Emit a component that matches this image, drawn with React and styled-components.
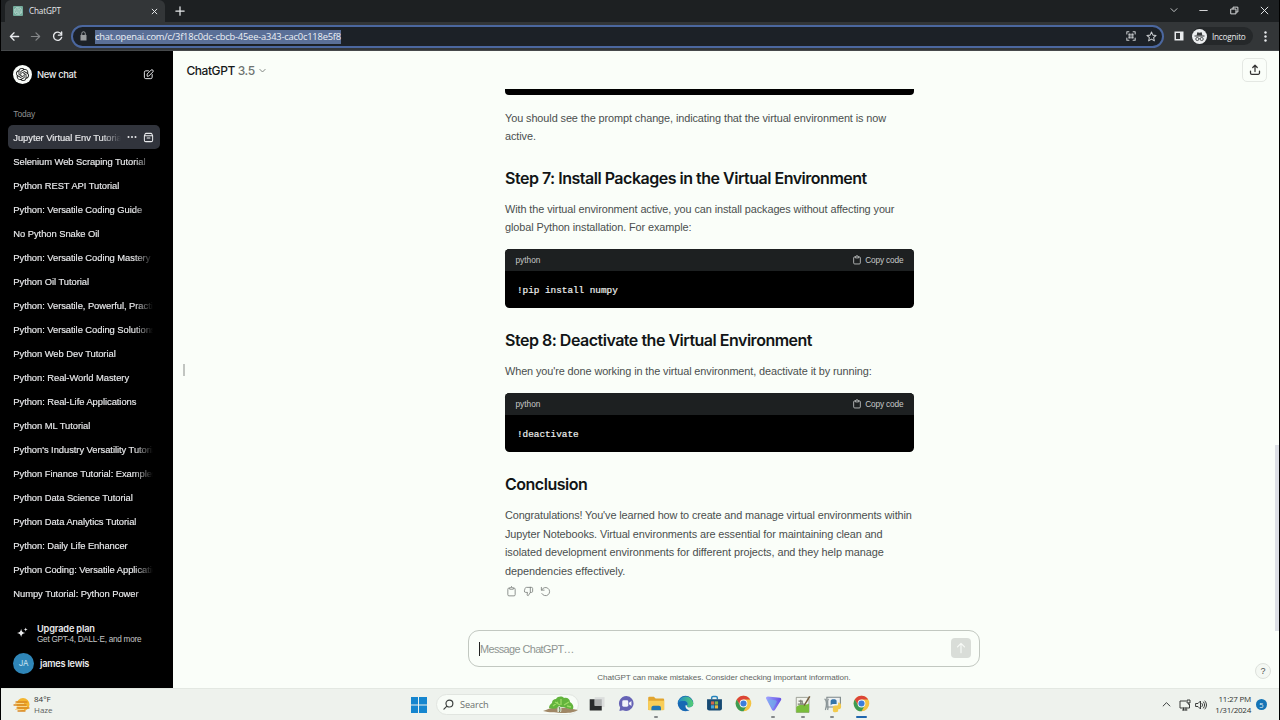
import React from "react";
import styled, { createGlobalStyle, css } from "styled-components";
import { SiOpenai } from "react-icons/si";

const sans = `"Liberation Sans", Arial, sans-serif`;
const display = `Inter, "Liberation Sans", sans-serif`;
const system = `"Open Sans", "Noto Sans", sans-serif`;

const GlobalStyle = createGlobalStyle`
  *, *::before, *::after { box-sizing: border-box; }
  body { margin: 0; background: #000; overflow: hidden; }
  svg { display: block; flex: none; }
`;

const Screen = styled.div`
  width: 1280px;
  height: 720px;
  padding: 0 1px;
  display: flex;
  flex-direction: column;
  background: #000;
  font-family: ${sans};
  overflow: hidden;
`;

/* ---------- browser chrome ---------- */
const TabStrip = styled.div`
  height: 22px;
  flex: none;
  display: flex;
  align-items: center;
  background: #1d2022;
  color: #e6e8ea;
  padding-left: 4px;
`;
const Tab = styled.div`
  width: 160px;
  height: 22px;
  display: flex;
  align-items: center;
  padding: 0 7px 0 8px;
  background: #333638;
  border-radius: 6px 6px 0 0;
  font: 8.2px ${system};
  letter-spacing: -0.18px;
`;
const Favicon = styled.span`
  width: 10px;
  height: 10px;
  margin-right: 6px;
  display: grid;
  place-items: center;
  background: #75ac9d;
  color: #c9e2da;
  border-radius: 1px;
`;
const TabTitle = styled.span`
  flex: 1;
  padding-bottom: 1px;
`;
const NewTab = styled.div`
  margin-left: 10px;
`;
const WindowButtons = styled.div`
  margin-left: auto;
  display: flex;
  align-items: center;
  gap: 21.3px;
  padding-right: 10px;
  margin-top: -2px;
`;
const Toolbar = styled.div`
  height: 29px;
  flex: none;
  display: flex;
  align-items: center;
  background: #333638;
  border-bottom: 1px solid #46494b;
  color: #e8eaed;
  padding-left: 8px;
`;
const NavButtons = styled.div`
  width: 62px;
  display: flex;
  align-items: center;
  gap: 10.3px;
`;
const AddressBar = styled.div`
  width: 1093px;
  height: 23px;
  display: flex;
  align-items: center;
  border: 2px solid #4b679f;
  border-radius: 12px;
  background: #1c2127;
  padding: 0 5px 0 6px;
`;
const Url = styled.span`
  margin-left: 7px;
  height: 14px;
  margin-top: 1px;
  line-height: 14px;
  background: #5a6f97;
  color: #eceff5;
  font-family: ${system};
  font-size: 9.33px;
  letter-spacing: -0.19px;
  white-space: nowrap;
`;
const AddressActions = styled.div`
  margin-left: auto;
  display: flex;
  align-items: center;
  gap: 10.5px;
  color: #c8cbce;
`;
const ToolbarEnd = styled.div`
  display: flex;
  align-items: center;
  margin-left: 10px;
`;
const Incognito = styled.div`
  height: 18px;
  margin: 0 10.5px 0 8px;
  width: 61px;
  display: flex;
  align-items: center;
  gap: 5px;
  border-radius: 9px;
  background: #25282a;
  font: 8.2px ${system};
  letter-spacing: -0.22px;
`;

/* ---------- page ---------- */
const Page = styled.div`
  height: 637px;
  flex: none;
  display: flex;
  background: #fafef9;
`;
const Sidebar = styled.nav`
  width: 172px;
  flex: none;
  display: flex;
  flex-direction: column;
  background: #000;
  color: #e9eaec;
  padding: 0 13px 0 7px;
`;
const NewChat = styled.div`
  height: 46px;
  display: flex;
  align-items: center;
  padding: 0 6px 0 5px;
  font-family: ${display};
  font-size: 9.33px;
  font-weight: 500;
  letter-spacing: -0.35px;
  span:nth-child(2) { flex: 1; padding-top: 1px; }
`;
const LogoCircle = styled.span`
  width: 19px;
  height: 19px;
  margin-right: 5px;
  display: grid;
  place-items: center;
  border-radius: 50%;
  background: #f8fbf8;
  color: #111;
`;
const SectionLabel = styled.div`
  height: 28px;
  padding: 11px 5.3px 0;
  font-size: 8.4px;
  line-height: 12px;
  letter-spacing: -0.1px;
  color: #8f9191;
`;
const ChatRow = styled.div`
  height: 24px;
  flex: none;
  display: flex;
  align-items: center;
  padding: 0 6px 0 5.3px;
  border-radius: 5px;
  font-size: 9.4px;
  white-space: nowrap;
  ${(p) => p.$active && css`background: #31343c;`}
`;
const ChatTitle = styled.span`
  flex: 1;
  overflow: hidden;
  padding-top: 1px;
  line-height: 16px;
  letter-spacing: -0.05px;
  -webkit-text-stroke: 0.15px currentColor;
  margin-right: ${(p) => (p.$active ? 6 : 1)}px;
  mask-image: linear-gradient(to right, #000 calc(100% - 19px), transparent);
`;
const RowActions = styled.span`
  display: flex;
  align-items: center;
  gap: 6px;
`;
const SidebarFooter = styled.div`
  margin-top: auto;
  padding-bottom: 14px;
`;
const Upgrade = styled.div`
  display: flex;
  align-items: center;
  gap: 9px;
  padding-left: 9px;
  height: 26px;
  svg { margin-top: -3px; }
`;
const UpgradeTitle = styled.div`
  font-family: ${display};
  font-size: 9.2px;
  line-height: 10px;
  font-weight: 600;
  letter-spacing: -0.15px;
`;
const UpgradeText = styled.div`
  font-size: 8.2px;
  line-height: 11px;
  letter-spacing: -0.27px;
  color: #c5c7c8;
  white-space: nowrap;
`;
const User = styled.div`
  display: flex;
  align-items: center;
  gap: 6px;
  height: 22px;
  margin-top: 5px;
  padding-left: 5px;
  font-family: ${display};
  font-size: 9.2px;
  font-weight: 600;
  letter-spacing: -0.22px;
`;
const Avatar = styled.span`
  width: 21px;
  height: 21px;
  display: grid;
  place-items: center;
  border-radius: 50%;
  background: #2f86b8;
  color: #c6e2f1;
  font-size: 8px;
  font-weight: 400;
`;

const Main = styled.main`
  position: relative;
  flex: 1;
  display: flex;
  flex-direction: column;
`;
const Header = styled.header`
  height: 38px;
  flex: none;
  display: flex;
  align-items: center;
  justify-content: space-between;
  padding: 0 12px 0 13.5px;
`;
const Model = styled.div`
  display: flex;
  align-items: center;
  gap: 3px;
  font-family: ${display};
  font-size: 12px;
  font-weight: 500;
  letter-spacing: -0.45px;
  color: #16191a;
  span { color: #6e7371; }
`;
const ShareButton = styled.div`
  width: 25px;
  height: 24px;
  display: grid;
  place-items: center;
  border: 1px solid #e4e8e3;
  border-radius: 5px;
  color: #333;
`;
const Article = styled.article`
  width: 409px;
  height: 541px;
  flex: none;
  margin-left: 332px;
  color: #4a4f4e;
`;
const PreviousBlock = styled.div`
  height: 6px;
  background: #000;
  border-radius: 0 0 4px 4px;
`;
const Paragraph = styled.p`
  margin: 0;
  padding-top: ${(p) => p.$top || 10.7}px;
  font-size: 10.9px;
  line-height: 18.67px;
  white-space: nowrap;
`;
const Line = styled.span`
  display: block;
  letter-spacing: ${(p) => p.$track ?? -0.09}px;
`;
const Heading = styled.h3`
  margin: 0;
  padding-top: ${(p) => p.$top || 21.6}px;
  font-family: ${display};
  font-size: 16px;
  line-height: 21.3px;
  font-weight: 600;
  letter-spacing: ${(p) => p.$track ?? -0.49}px;
  color: #111516;
  white-space: nowrap;
`;
const CodeCard = styled.div`
  height: 58.6px;
  margin-top: 12.6px;
  border-radius: 4.5px;
  overflow: hidden;
  background: #000;
`;
const CodeHeader = styled.div`
  height: 21.4px;
  display: flex;
  align-items: center;
  justify-content: space-between;
  padding: 0 10.5px;
  background: #1d2021;
  color: #c6c9c9;
  font-size: 8.3px;
`;
const CopyCode = styled.span`
  display: flex;
  align-items: center;
  gap: 3px;
  letter-spacing: -0.15px;
`;
const Code = styled.code`
  display: block;
  padding: 13.2px 12px 0;
  font: 400 9.33px/14px "Liberation Mono", monospace;
  -webkit-text-stroke: 0.2px currentColor;
  color: #eceeed;
`;
const MessageActions = styled.div`
  display: flex;
  gap: 6.3px;
  padding: 5px 0 0 0.6px;
  color: #858a87;
`;
const Composer = styled.div`
  width: 512px;
  height: 37px;
  flex: none;
  margin-left: 295px;
  display: flex;
  align-items: center;
  padding: 0 8px 1px 10px;
  border: 1px solid #c2c8c1;
  border-radius: 11px;
  color: #8f9592;
  font-size: 10.9px;
`;
const Caret = styled.span`
  width: 1px;
  height: 14px;
  margin-top: 1px;
  background: #222;
`;
const Placeholder = styled.span`
  flex: 1;
  padding-top: 2px;
  letter-spacing: -0.6px;
  span { letter-spacing: -0.2px; }
`;
const SendButton = styled.span`
  width: 20px;
  height: 20px;
  display: grid;
  place-items: center;
  border-radius: 4px;
  background: #d9ddd8;
  color: #f7faf6;
`;
const Disclaimer = styled.div`
  width: 512px;
  margin-left: 295px;
  text-align: center;
  padding-top: 5px;
  font-size: 8.1px;
  line-height: 12px;
  letter-spacing: -0.05px;
  color: #5f6563;
`;
const ResizeHandle = styled.div`
  position: absolute;
  left: 9.5px;
  top: 313px;
  width: 2.5px;
  height: 12px;
  background: #c1c5c1;
`;
const ScrollThumb = styled.div`
  position: absolute;
  right: 0;
  top: 394px;
  width: 4px;
  height: 186px;
  background: #dcdfe5;
`;
const Help = styled.div`
  position: absolute;
  right: 8px;
  bottom: 9px;
  width: 16px;
  height: 16px;
  display: grid;
  place-items: center;
  border: 1px solid #dde1dc;
  border-radius: 50%;
  background: #f4f8f3;
  color: #4c5150;
  font-size: 9px;
`;

/* ---------- taskbar ---------- */
const Taskbar = styled.footer`
  height: 32px;
  flex: none;
  display: flex;
  align-items: center;
  background: #eef2ed;
  color: #303332;
  font-family: ${system};
  font-size: 8px;
  border-top: 1px solid #e3e8e2;
`;
const Weather = styled.div`
  width: 409px;
  display: flex;
  align-items: center;
  gap: 4px;
  padding-left: 12px;
  line-height: 10.6px;
  div div:last-child { color: #5b5f5d; }
`;
const SearchBox = styled.div`
  width: 143px;
  height: 21px;
  margin: 0 8px 0 9px;
  display: flex;
  align-items: center;
  gap: 6px;
  padding-left: 6px;
  border: 1px solid #e1e5e0;
  border-radius: 11px;
  background: #f8fcf7;
  color: #6b6f6d;
  font-size: 9.2px;
  letter-spacing: -0.1px;
  svg:last-child { margin-left: auto; }
`;
const Apps = styled.div`
  display: flex;
  gap: 9.4px;
`;
const AppSlot = styled.div`
  width: 20px;
  height: 26px;
  padding-top: 3px;
  display: flex;
  flex-direction: column;
  align-items: center;
  justify-content: space-between;
  &::after {
    content: "";
    height: 2px;
    width: ${(p) => (p.$state === "active" ? 11 : 4)}px;
    border-radius: 1px;
    background: ${(p) => (p.$state === "active" ? "#1f66ad" : p.$state === "open" ? "#85898a" : "transparent")};
  }
`;
const Tray = styled.div`
  margin-left: auto;
  display: flex;
  align-items: center;
  padding-right: 12px;
`;
const Clock = styled.div`
  width: 42px;
  margin: 0 5px 0 2px;
  text-align: right;
  line-height: 10.6px;
  font-size: 8px;
  letter-spacing: -0.25px;
  white-space: nowrap;
`;
const Badge = styled.span`
  width: 11px;
  height: 11px;
  display: grid;
  place-items: center;
  border-radius: 50%;
  background: #1574b5;
  color: #e7f3fa;
  font-size: 7.5px;
`;

const Icon = ({ size = 12, width = 2, box = 24, children, ...rest }) => (
  <svg width={size} height={size} viewBox={`0 0 ${box} ${box}`} fill="none" stroke="currentColor"
    strokeWidth={width} strokeLinecap="round" strokeLinejoin="round" {...rest}>{children}</svg>
);
const TrayIcon = styled(Icon)`
  margin-left: ${(p) => p.$gap}px;
`;

const Clipboard = ({ size = 11 }) => (
  <Icon size={size} width={2}>
    <path d="M8 4.500H6.500A2.500 2.500 0 0 0 4 7v12a2.500 2.500 0 0 0 2.500 2.500h11A2.500 2.500 0 0 0 20 19V7a2.500 2.500 0 0 0-2.500-2.500H16" />
    <path d="M12 2a2 2 0 0 0-2 1.500H9A1 1 0 0 0 8 4.500V7h8V4.500a1 1 0 0 0-1-1h-1A2 2 0 0 0 12 2z" />
  </Icon>
);

const ChromeLogo = () => (
  <svg width="17" height="17" viewBox="0 0 24 24">
    <circle cx="12" cy="12" r="11" fill="#f3c343" />
    <path d="M2.470 6.500A11 11 0 0 1 21.530 6.500H12L7.240 14.750z" fill="#dc4538" />
    <path d="M2.470 6.500A11 11 0 0 0 12 23L16.760 14.750H7.240z" fill="#3d9b52" />
    <circle cx="12" cy="12" r="5.500" fill="#f5f8f5" />
    <circle cx="12" cy="12" r="4.300" fill="#3b7ddb" />
  </svg>
);

const EdgeLogo = () => (
  <svg width="17" height="17" viewBox="0 0 24 24">
    <defs>
      <linearGradient id="edgeTop" x1="0" x2="1"><stop stopColor="#1d87d0" /><stop offset="1" stopColor="#54cf70" /></linearGradient>
    </defs>
    <circle cx="12" cy="12" r="11" fill="#1768b3" />
    <path d="M1.300 11A11 11 0 0 1 23 12c0 4-3 5.500-6 5.500-2.500 0-3.500-1-2.600-2.600C16 12 14 8.500 10 8.500 6 8.500 3 9 1.300 11z" fill="url(#edgeTop)" />
    <path d="M14.400 14.900c-.9 1.600.1 2.600 2.600 2.600 2 0 4-.7 5.200-2.300l1.300 3.300-3 3c-5 .5-9-2-8.500-7z" fill="#eef2ed" />
  </svg>
);

const StoreLogo = () => (
  <svg width="17" height="17" viewBox="0 0 24 24">
    <path d="M8 6V4a2 2 0 0 1 2-2h4a2 2 0 0 1 2 2v2" fill="none" stroke="#2583bd" strokeWidth="2" />
    <path d="M1.500 6h21v13a3 3 0 0 1-3 3h-15a3 3 0 0 1-3-3z" fill="#174a73" />
    <path d="M7 9h4.500v4.500H7z" fill="#d1664c" /><path d="M12.500 9H17v4.500h-4.500z" fill="#82b84b" />
    <path d="M7 14.500h4.500V19H7z" fill="#45a7da" /><path d="M12.500 14.500H17V19h-4.500z" fill="#e7b941" />
  </svg>
);

const FolderLogo = () => (
  <svg width="18" height="17" viewBox="0 0 24 24">
    <path d="M1 4a1.500 1.500 0 0 1 1.500-1.500H9L11.500 5H22a1.500 1.500 0 0 1 1.500 1.500V21H1z" fill="#e2a52f" />
    <path d="M1 8h22.500v12a1.500 1.500 0 0 1-1.500 1.500H2.500A1.500 1.500 0 0 1 1 20z" fill="#f8ce59" />
    <path d="M5.500 21.500V18a3 3 0 0 1 3-3H16a3 3 0 0 1 3 3v3.500z" fill="#2176b4" />
  </svg>
);

const TaskViewLogo = () => (
  <svg width="17" height="17" viewBox="0 0 24 24">
    <path d="M8 3h14v14H8z" fill="#dcdedd" /><path d="M1 6h7v9h10v7H1z" fill="#282a2b" /><path d="M8 6h10v9H8z" fill="#aeb0b0" />
  </svg>
);

const ChatLogo = () => (
  <svg width="17" height="17" viewBox="0 0 24 24">
    <path d="M12 1.500A10.500 10.500 0 1 1 7 21.500L2 22.500 3 17.500A10.500 10.500 0 0 1 12 1.500z" fill="#6663b5" />
    <rect x="6" y="7.500" width="8.500" height="9" rx="2" fill="#f2f3fa" /><path d="m15.500 11 3.500-2.500v7L15.500 13z" fill="#f2f3fa" />
  </svg>
);

const VpnLogo = () => (
  <svg width="17" height="17" viewBox="0 0 24 24">
    <defs><linearGradient id="vpn" x1="0" x2="1"><stop stopColor="#9fa5ff" /><stop offset="1" stopColor="#6550e2" /></linearGradient></defs>
    <path d="M1.500 5C1 3 2.500 2 4 2l17 2c2 .3 2.500 2 1.500 3.500L14 21c-1 1.500-3 1.500-4 0z" fill="url(#vpn)" />
    <path d="m5 6 10 1.500c2 .5 2 2 1 3.500l-5 9L4 8z" fill="#6fb6e9" opacity=".65" />
  </svg>
);

const NotepadLogo = () => (
  <svg width="18" height="19" viewBox="0 0 24 25">
    <path d="M3 3h15l2 3v17H3z" fill="#f2f4ed" stroke="#858a7d" />
    <path d="M3 16c5-6 10-1 17-5v12H3z" fill="#79bd3b" />
    <path d="M6 8h5v4M9 6v5M5 12h9" stroke="#7b7e72" strokeWidth="1.500" fill="none" />
    <path d="m22 2-7 11-2 2 .5-3L20 1z" fill="#725b3b" />
  </svg>
);

const PythonLogo = () => (
  <svg width="19" height="18" viewBox="0 0 25 24">
    <path d="M5 3h18v13H5z" fill="#eef1f1" stroke="#7e8789" strokeWidth="1.500" />
    <path d="M2 5c3 2 3 9 1 15M7 5c-3 5 1 9-1 15" stroke="#899496" strokeWidth="1.600" fill="none" />
    <path d="M10 14V8c0-2 1.500-2.500 4-2.500S18 6 18 8v4h-5c-2 0-2 1-3 2z" fill="#3574a9" />
    <path d="M20 10c3 0 4 2 4 5s-1 4-3 4h-1v3c-3 2-7 1-7-1v-4c0-2 1-3 3-3h3c1 0 1-1 1-4z" fill="#f3ca4c" />
  </svg>
);

const TreeArt = () => (
  <svg width="35" height="17" viewBox="0 0 35 17">
    <path d="M0 15c7-3 10-4 15-3 8-1 13 1 20 2-5 3-10 3-17 3-7-1-11 0-18-2z" fill="#a08766" />
    <path d="M6 12c0-3 2-4 3-5 0-3 2-4 4-4 2-3 6-3 8-1 3-1 6 1 6 4 3 2 4 4 3 7-5 1-8-2-11-2-3 0-7 3-13 1z" fill="#62b43c" />
    <path d="m10 10 5-4M18 9V3M21 9l5-3M12 6l5 3M24 10l4 1" stroke="#9cdb65" strokeWidth="1.300" />
    <path d="M14.500 16c-.5-4 0-6 2-6 2 1 2.500 3 1.500 6z" fill="#d9e3d0" /><path d="M16 11c1 1 1 3 .5 5" stroke="#65744f" fill="none" />
  </svg>
);

const chats = [
  "Jupyter Virtual Env Tutorial", "Selenium Web Scraping Tutorial", "Python REST API Tutorial",
  "Python: Versatile Coding Guide", "No Python Snake Oil", "Python: Versatile Coding Mastery",
  "Python Oil Tutorial", "Python: Versatile, Powerful, Practical", "Python: Versatile Coding Solutions",
  "Python Web Dev Tutorial", "Python: Real-World Mastery", "Python: Real-Life Applications",
  "Python ML Tutorial", "Python's Industry Versatility Tutorial", "Python Finance Tutorial: Examples",
  "Python Data Science Tutorial", "Python Data Analytics Tutorial", "Python: Daily Life Enhancer",
  "Python Coding: Versatile Applications", "Numpy Tutorial: Python Power",
];

const CodeBlock = ({ children }) => (
  <CodeCard>
    <CodeHeader><span>python</span><CopyCode><Clipboard size={10} />Copy code</CopyCode></CodeHeader>
    <Code>{children}</Code>
  </CodeCard>
);

const Browser = () => (
  <>
    <TabStrip>
      <Tab>
        <Favicon><SiOpenai size={8} /></Favicon>
        <TabTitle>ChatGPT</TabTitle>
        <Icon size={7} width={3.4}><path d="m4 4 16 16M20 4 4 20" /></Icon>
      </Tab>
      <NewTab><Icon size={10} width={3}><path d="M12 2v20M2 12h20" /></Icon></NewTab>
      <WindowButtons>
        <Icon size={8} width={2.4}><path d="m3 8 9 9 9-9" /></Icon>
        <Icon size={9} width={2.4}><path d="M2 12h20" /></Icon>
        <Icon size={9} width={2.4}><path d="M3 8h13v13H3zM8 8V3h13v13h-5" /></Icon>
        <Icon size={9} width={2.6}><path d="m3 3 18 18M21 3 3 21" /></Icon>
      </WindowButtons>
    </TabStrip>
    <Toolbar>
      <NavButtons>
        <Icon size={11} width={2.9}><path d="M21 12H3m8-8-8 8 8 8" /></Icon>
        <Icon size={11} width={2.7} color="#858789"><path d="M3 12h18m-8-8 8 8-8 8" /></Icon>
        <Icon size={11} width={3}><path d="M20 6.500A9 9 0 1 0 21 14M21 2v7h-7" /></Icon>
      </NavButtons>
      <AddressBar>
        <svg width="9" height="10" viewBox="0 0 18 20"><path d="M3 8h12v11H3z" fill="#9a9da0" /><path d="M5.500 8V5a3.500 3.500 0 0 1 7 0v3" fill="none" stroke="#9a9da0" strokeWidth="2" /></svg>
        <Url>chat.openai.com/c/3f18c0dc-cbcb-45ee-a343-cac0c118e5f8</Url>
        <AddressActions>
          <Icon size={10} width={2.5}><path d="M2 7V2h5M17 2h5v5M22 17v5h-5M7 22H2v-5M7 7h3v3H7zM14 7h3v3h-3zM7 14h3v3H7zM14 14h3v3h-3z" /></Icon>
          <Icon size={11} width={2.2}><path d="m12 2 3 7 7 .6-5.400 4.800 1.700 7.100L12 17.700l-6.300 3.800 1.700-7.100L2 9.600 9 9z" /></Icon>
        </AddressActions>
      </AddressBar>
      <ToolbarEnd>
        <svg width="10" height="10" viewBox="0 0 20 20"><path d="M1 1h18v18H1z" fill="#e9ebed" /><path d="M4 4h8v12H4z" fill="#333638" /></svg>
        <Incognito>
          <svg width="15" height="15" viewBox="0 0 24 24">
            <circle cx="12" cy="12" r="12" fill="#eceef0" />
            <path d="m8.500 5 3.500 1 3.500-1 1 5h-9zM4 10.500h16v1.500H4z" fill="#333638" />
            <circle cx="8.500" cy="16" r="2.500" fill="none" stroke="#333638" strokeWidth="1.300" />
            <circle cx="15.500" cy="16" r="2.500" fill="none" stroke="#333638" strokeWidth="1.300" />
            <path d="M11 15.500h2" stroke="#333638" />
          </svg>
          Incognito
        </Incognito>
        <svg width="3" height="11" viewBox="0 0 3 11" fill="#e8eaed"><circle cx="1.500" cy="1.500" r="1.200" /><circle cx="1.500" cy="5.500" r="1.200" /><circle cx="1.500" cy="9.500" r="1.200" /></svg>
      </ToolbarEnd>
    </Toolbar>
  </>
);

const History = () => (
  <Sidebar>
    <NewChat>
      <LogoCircle><SiOpenai size={13} /></LogoCircle>
      <span>New chat</span>
      <Icon size={11} width={2.1}><path d="M12 4H6a3 3 0 0 0-3 3v11a3 3 0 0 0 3 3h11a3 3 0 0 0 3-3v-6M9 15v-4l8.500-8.500a2.500 2.500 0 0 1 4 4L13 15z" /></Icon>
    </NewChat>
    <SectionLabel>Today</SectionLabel>
    {chats.map((title, i) => (
      <ChatRow key={title} $active={i === 0}>
        <ChatTitle $active={i === 0}>{title}</ChatTitle>
        {i === 0 && (
          <RowActions>
            <svg width="10" height="4" viewBox="0 0 10 4" fill="currentColor"><circle cx="1.500" cy="2" r="1" /><circle cx="5" cy="2" r="1" /><circle cx="8.500" cy="2" r="1" /></svg>
            <Icon size={11} width={2.2}><path d="M3 8v10a3 3 0 0 0 3 3h12a3 3 0 0 0 3-3V8zM3 8l2-4a2 2 0 0 1 1.500-1h11A2 2 0 0 1 19 4l2 4M9 13h6" /></Icon>
          </RowActions>
        )}
      </ChatRow>
    ))}
    <SidebarFooter>
      <Upgrade>
        <svg width="11" height="11" viewBox="0 0 24 24" fill="currentColor"><path d="M9 4c1 6 3 8 9 9-6 1-8 3-9 9-1-6-3-8-9-9 6-1 8-3 9-9zM19 1c.5 3 1.500 4 4.500 4.500C20.500 6 19.500 7 19 10c-.5-3-1.500-4-4.500-4.500C17.500 5 18.500 4 19 1z" /></svg>
        <div>
          <UpgradeTitle>Upgrade plan</UpgradeTitle>
          <UpgradeText>Get GPT-4, DALL·E, and more</UpgradeText>
        </div>
      </Upgrade>
      <User><Avatar>JA</Avatar>james lewis</User>
    </SidebarFooter>
  </Sidebar>
);

const Conversation = () => (
  <Main>
    <Header>
      <Model>ChatGPT <span>3.5</span><Icon size={9} width={2.5} color="#7a7f7c"><path d="m5 9 7 7 7-7" /></Icon></Model>
      <ShareButton><Icon size={12} width={2.5}><path d="M3 14v4a2.500 2.500 0 0 0 2.500 2.500h13A2.500 2.500 0 0 0 21 18v-4M12 15V3M7.500 7 12 2.500 16.500 7" /></Icon></ShareButton>
    </Header>
    <Article>
      <PreviousBlock />
      <Paragraph $top={13.8}>
        <Line>You should see the prompt change, indicating that the virtual environment is now</Line>
        <Line>active.</Line>
      </Paragraph>
      <Heading $top={22}>Step 7: Install Packages in the Virtual Environment</Heading>
      <Paragraph $top={10.1}>
        <Line>With the virtual environment active, you can install packages without affecting your</Line>
        <Line>global Python installation. For example:</Line>
      </Paragraph>
      <CodeBlock>!pip install numpy</CodeBlock>
      <Heading $top={21.8}>Step 8: Deactivate the Virtual Environment</Heading>
      <Paragraph><Line $track={-0.1}>When you're done working in the virtual environment, deactivate it by running:</Line></Paragraph>
      <CodeBlock>!deactivate</CodeBlock>
      <Heading $top={22.3}>Conclusion</Heading>
      <Paragraph $top={10.7}>
        <Line $track={-0.12}>Congratulations! You've learned how to create and manage virtual environments within</Line>
        <Line $track={-0.1}>Jupyter Notebooks. Virtual environments are essential for maintaining clean and</Line>
        <Line $track={-0.07}>isolated development environments for different projects, and they help manage</Line>
        <Line $track={-0.04}>dependencies effectively.</Line>
      </Paragraph>
      <MessageActions>
        <Clipboard />
        <Icon size={11} width={2}><path d="M16 3H7.500a3 3 0 0 0-2.800 2L3 10.500A3 3 0 0 0 6 14h4l-1 4a2.500 2.500 0 0 0 2.500 3L16 14V3zM16 3h2.500A2.500 2.500 0 0 1 21 5.500v6a2.500 2.500 0 0 1-2.500 2.500H16" /></Icon>
        <Icon size={11} width={2}><path d="M3 3v6h6M3.500 9a9 9 0 1 1 .5 7.500" /></Icon>
      </MessageActions>
    </Article>
    <Composer>
      <Caret />
      <Placeholder>Message ChatGPT…</Placeholder>
      <SendButton><Icon size={14} width={2}><path d="M12 20V4M6 10l6-6 6 6" /></Icon></SendButton>
    </Composer>
    <Disclaimer>ChatGPT can make mistakes. Consider checking important information.</Disclaimer>
    <ResizeHandle />
    <ScrollThumb />
    <Help>?</Help>
  </Main>
);

const apps = [
  [TaskViewLogo], [ChatLogo], [FolderLogo, "open"], [EdgeLogo], [StoreLogo], [ChromeLogo],
  [VpnLogo, "open"], [NotepadLogo, "open"], [PythonLogo, "open"], [ChromeLogo, "active"],
];

const Desktop = () => (
  <Taskbar>
    <Weather>
      <svg width="17" height="16" viewBox="0 0 17 16">
        <circle cx="10" cy="7.500" r="6.500" fill="#f4b52e" />
        <path d="M3 5h11M1 8h12M4 11h12M5 14h7" stroke="#d98924" strokeWidth="1.300" strokeLinecap="round" /><path d="M2 6.500h9M4 9.500h10M2 12.500h9" stroke="#f8d88b" strokeWidth="1" />
      </svg>
      <div><div>84°F</div><div>Haze</div></div>
    </Weather>
    <svg width="17" height="16" viewBox="0 0 17 16" fill="#1686cf"><path d="M1 0h7v7.500H1zM9 0h8v7.500H9zM1 8.500h7V16H1zM9 8.500h8V16H9z" /></svg>
    <SearchBox>
      <Icon size={11} width={2.6} color="#3c403e"><circle cx="14" cy="10" r="7.500" /><path d="m8 16-6 6" /></Icon>
      Search
      <TreeArt />
    </SearchBox>
    <Apps>{apps.map(([Logo, state], i) => <AppSlot key={i} $state={state}><Logo /></AppSlot>)}</Apps>
    <Tray>
      <Icon size={9} width={2.5}><path d="m3 16 9-9 9 9" /></Icon>
      <TrayIcon $gap={8} size={12} width={1.900}><path d="M14 4H2v14h19v-7M7 22h9M9 18v4M14 18v4M17 2h5v6h-5zM19.500 8v3" /></TrayIcon>
      <TrayIcon $gap={4} size={12} width={1.900}><path d="M2 9h4l5-5v16l-5-5H2zM14 9c1.500 2 1.500 4 0 6M17 6c3 4 3 8 0 12M20 4c4 5 4 11 0 16" /></TrayIcon>
      <Clock>11:27 PM<br />1/31/2024</Clock>
      <Badge>5</Badge>
    </Tray>
  </Taskbar>
);

export default function App() {
  return (
    <>
      <GlobalStyle />
      <Screen>
        <Browser />
        <Page><History /><Conversation /></Page>
        <Desktop />
      </Screen>
    </>
  );
}
